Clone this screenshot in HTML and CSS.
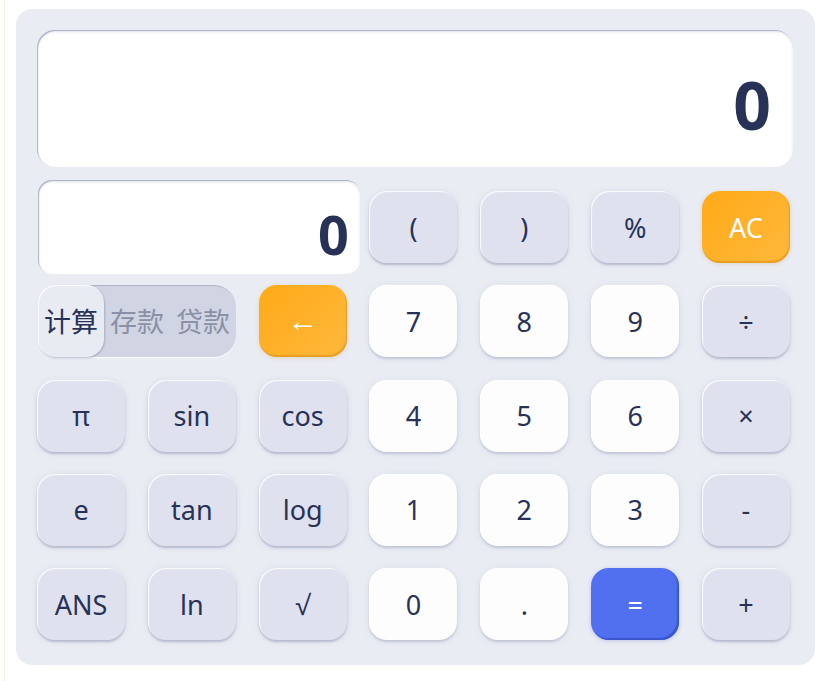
FILE: index.html
```html
<!DOCTYPE html>
<html lang="zh">
<head>
<meta charset="utf-8">
<title>计算器</title>
<link rel="stylesheet" href="styles.css">
</head>
<body>
<div class="page">
  <div class="calc">
    <div class="display-main">0</div>
    <div class="keys">
      <div class="display-sub">0</div>
      <button class="key fn">(</button>
      <button class="key fn">)</button>
      <button class="key fn">%</button>
      <button class="key orange">AC</button>

      <div class="toggle">
        <span class="seg active">计算</span>
        <span class="seg">存款</span>
        <span class="seg">贷款</span>
      </div>
      <button class="key orange arrow">←</button>
      <button class="key num">7</button>
      <button class="key num">8</button>
      <button class="key num">9</button>
      <button class="key fn">÷</button>

      <button class="key fn">π</button>
      <button class="key fn">sin</button>
      <button class="key fn">cos</button>
      <button class="key num">4</button>
      <button class="key num">5</button>
      <button class="key num">6</button>
      <button class="key fn">×</button>

      <button class="key fn">e</button>
      <button class="key fn">tan</button>
      <button class="key fn">log</button>
      <button class="key num">1</button>
      <button class="key num">2</button>
      <button class="key num">3</button>
      <button class="key fn">-</button>

      <button class="key fn">ANS</button>
      <button class="key fn">ln</button>
      <button class="key fn">√</button>
      <button class="key num">0</button>
      <button class="key num">.</button>
      <button class="key blue">=</button>
      <button class="key fn">+</button>
    </div>
  </div>
</div>
</body>
</html>
```

FILE: styles.css
```css
html, body {
  margin: 0;
  padding: 0;
  background: #ffffff;
}

body {
  font-family: "Noto Sans", "Open Sans", "Noto Sans CJK SC", sans-serif;
  color: #283257;
}

.page {
  padding: 9px 0 0 11px;
  height: 681px;
  box-sizing: border-box;
  border-left: 1px solid #f5f1e2;
  margin-left: 4px;
}

.calc {
  width: 799px;
  height: 656px;
  box-sizing: border-box;
  background: #e9ecf3;
  border-radius: 16px;
  padding: 21px 22px 25px 21px;
}

.display-main {
  width: 756px;
  height: 137px;
  box-sizing: border-box;
  background: #ffffff;
  border-radius: 18px;
  box-shadow: inset 1px 1px 1px rgba(140, 148, 175, 0.7), inset 0 2px 3px rgba(160, 166, 190, 0.25);
  display: flex;
  align-items: center;
  justify-content: flex-end;
  padding: 10px 22px 0 0;
  font-size: 66px;
  font-weight: 700;
  line-height: 1;
  color: #283257;
}

.keys {
  margin-top: 24px;
  display: grid;
  grid-template-columns: repeat(7, 88px);
  grid-template-rows: repeat(5, 72px);
  column-gap: 22.83px;
  row-gap: 22.25px;
}

.display-sub {
  grid-column: 1 / 4;
  width: 322px;
  height: 94px;
  margin-left: 1px;
  align-self: center;
  box-sizing: border-box;
  background: #ffffff;
  border-radius: 14px;
  box-shadow: inset 1px 1px 1px rgba(140, 148, 175, 0.7), inset 0 2px 3px rgba(160, 166, 190, 0.25);
  display: flex;
  align-items: center;
  justify-content: flex-end;
  padding: 14px 11px 0 0;
  font-size: 54px;
  font-weight: 700;
  line-height: 1;
  color: #283257;
}

.key {
  border: none;
  margin: 0;
  padding: 0;
  border-radius: 18px;
  font-family: "Noto Sans", "Open Sans", sans-serif;
  font-size: 27px;
  color: #283257;
  display: flex;
  align-items: center;
  justify-content: center;
  line-height: 1;
  cursor: pointer;
}

.fn {
  background: #dfe2ee;
  box-shadow: inset 1px 1px 1px rgba(255, 255, 255, 0.9), 0 2px 2px rgba(150, 158, 185, 0.55), 0 1px 6px rgba(180, 186, 208, 0.35);
}

.num {
  background: #fdfdfe;
  box-shadow: inset 1px 1px 1px rgba(255, 255, 255, 1), 0 2px 2px rgba(160, 166, 192, 0.45), 0 1px 6px rgba(190, 196, 215, 0.35);
}

.orange {
  background: linear-gradient(135deg, #ffaa18 0%, #ffb83c 100%);
  color: #ffffff;
  box-shadow: inset -1px -2px 1px rgba(214, 140, 20, 0.55), 0 1px 4px rgba(200, 160, 90, 0.3);
}

.arrow {
  font-size: 30px;
  padding-bottom: 2px;
}

.blue {
  background: #5070f0;
  color: #ffffff;
  box-shadow: inset -2px -2px 1px rgba(50, 76, 190, 0.7), 0 1px 4px rgba(90, 110, 200, 0.3);
}

.toggle {
  grid-column: 1 / 3;
  width: 198px;
  margin-left: 1px;
  background: #d1d5e3;
  border-radius: 22px;
  box-shadow: inset 1px 1px 1px rgba(150, 156, 180, 0.6), 0 1px 1px rgba(255, 255, 255, 0.9);
  display: flex;
  align-items: stretch;
}

.seg {
  flex: 1 1 0;
  display: flex;
  align-items: center;
  justify-content: center;
  font-family: "Noto Sans CJK SC", sans-serif;
  font-size: 27px;
  color: #8a90a6;
  padding-bottom: 1px;
  white-space: nowrap;
}

.seg.active {
  background: #e9ebf3;
  color: #283257;
  border-radius: 18px;
  box-shadow: 1px 1px 2px rgba(140, 148, 175, 0.6), inset 1px 1px 1px rgba(255, 255, 255, 0.9);
}
```
